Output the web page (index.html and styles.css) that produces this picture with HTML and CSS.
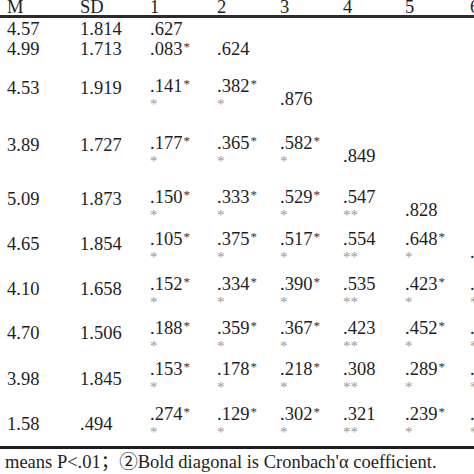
FILE: index.html
```html
<!DOCTYPE html>
<html lang="en">
<head>
    <meta charset="UTF-8">
    <meta name="viewport" content="width=device-width, initial-scale=1.0">
    <title>Correlation Table</title>

    <link rel="stylesheet" href="styles.css">
</head>
<body>

    <div class="table">
        <!-- Header -->
        <div class="row head">
            <div class="cell">M</div>
            <div class="cell">SD</div>
            <div class="cell">1</div>
            <div class="cell">2</div>
            <div class="cell">3</div>
            <div class="cell">4</div>
            <div class="cell">5</div>
            <div class="cell">6</div>
        </div>

        <div class="row r1">
            <div class="cell num">4.57</div>
            <div class="cell num">1.814</div>
            <div class="cell">.627</div>
        </div>

        <div class="row r2">
            <div class="cell num">4.99</div>
            <div class="cell num">1.713</div>
            <div class="cell">.083<sup>*</sup></div>
            <div class="cell">.624</div>
        </div>

        <div class="row r3">
            <div class="cell num">4.53</div>
            <div class="cell num">1.919</div>
            <div class="cell">.141<sup>*</sup><span class="mark">*</span></div>
            <div class="cell">.382<sup>*</sup><span class="mark">*</span></div>
            <div class="cell diag">.876</div>
        </div>

        <div class="row r4">
            <div class="cell num">3.89</div>
            <div class="cell num">1.727</div>
            <div class="cell">.177<sup>*</sup><span class="mark">*</span></div>
            <div class="cell">.365<sup>*</sup><span class="mark">*</span></div>
            <div class="cell">.582<sup>*</sup><span class="mark">*</span></div>
            <div class="cell diag">.849</div>
        </div>

        <div class="row r5">
            <div class="cell num">5.09</div>
            <div class="cell num">1.873</div>
            <div class="cell">.150<sup>*</sup><span class="mark">*</span></div>
            <div class="cell">.333<sup>*</sup><span class="mark">*</span></div>
            <div class="cell">.529<sup>*</sup><span class="mark">*</span></div>
            <div class="cell">.547<span class="mark">**</span></div>
            <div class="cell diag">.828</div>
        </div>

        <div class="row r6">
            <div class="cell num">4.65</div>
            <div class="cell num">1.854</div>
            <div class="cell">.105<sup>*</sup><span class="mark">*</span></div>
            <div class="cell">.375<sup>*</sup><span class="mark">*</span></div>
            <div class="cell">.517<sup>*</sup><span class="mark">*</span></div>
            <div class="cell">.554<span class="mark">**</span></div>
            <div class="cell">.648<sup>*</sup><span class="mark">*</span></div>
            <div class="cell diag">.</div>
        </div>

        <div class="row r7">
            <div class="cell num">4.10</div>
            <div class="cell num">1.658</div>
            <div class="cell">.152<sup>*</sup><span class="mark">*</span></div>
            <div class="cell">.334<sup>*</sup><span class="mark">*</span></div>
            <div class="cell">.390<sup>*</sup><span class="mark">*</span></div>
            <div class="cell">.535<span class="mark">**</span></div>
            <div class="cell">.423<sup>*</sup><span class="mark">*</span></div>
            <div class="cell">.<span class="mark">*</span></div>
        </div>

        <div class="row r8">
            <div class="cell num">4.70</div>
            <div class="cell num">1.506</div>
            <div class="cell">.188<sup>*</sup><span class="mark">*</span></div>
            <div class="cell">.359<sup>*</sup><span class="mark">*</span></div>
            <div class="cell">.367<sup>*</sup><span class="mark">*</span></div>
            <div class="cell">.423<span class="mark">**</span></div>
            <div class="cell">.452<sup>*</sup><span class="mark">*</span></div>
            <div class="cell">.<span class="mark">*</span></div>
        </div>

        <div class="row r9">
            <div class="cell num">3.98</div>
            <div class="cell num">1.845</div>
            <div class="cell">.153<sup>*</sup><span class="mark">*</span></div>
            <div class="cell">.178<sup>*</sup><span class="mark">*</span></div>
            <div class="cell">.218<sup>*</sup><span class="mark">*</span></div>
            <div class="cell">.308<span class="mark">**</span></div>
            <div class="cell">.289<sup>*</sup><span class="mark">*</span></div>
            <div class="cell">.<span class="mark">*</span></div>
        </div>

        <div class="row r10">
            <div class="cell num">1.58</div>
            <div class="cell num">.494</div>
            <div class="cell">.274<sup>*</sup><span class="mark">*</span></div>
            <div class="cell">.129<sup>*</sup><span class="mark">*</span></div>
            <div class="cell">.302<sup>*</sup><span class="mark">*</span></div>
            <div class="cell">.321<span class="mark">**</span></div>
            <div class="cell">.239<sup>*</sup><span class="mark">*</span></div>
            <div class="cell">.<span class="mark">*</span></div>
        </div>
    </div>

    <p class="note">means P&lt;.01；②Bold diagonal is Cronbach'α coefficient.</p>

</body>
</html>
```

FILE: styles.css
```css
body {
    margin: 0;
    background-color: #fff;
    color: #1e1e1e;
    font-family: "Liberation Serif", "Noto Sans CJK SC", serif;
    font-size: 18.5px;
    overflow: hidden;
    width: 474px;
    height: 474px;
}

/* Table */
.table {
    margin-top: -2px;
    width: 560px;
}

.row {
    display: grid;
    grid-template-columns: 73px 70px 67px 63px 63px 62px 65px 80px;
    padding-left: 7px;
    line-height: 20px;
    align-items: start;
}

.head {
    height: 17px;
    line-height: 18px;
    border-bottom: 3px solid #2b2b2b;
    margin-bottom: 1px;
}

.cell {
    white-space: nowrap;
}

/* Row heights */
.r1 { height: 20px; }
.r2 { height: 37px; }
.r3 { height: 57px; }
.r4 { height: 54px; }
.r5 { height: 42px; }
.r6 { height: 45px; }
.r7 { height: 44px; }
.r8 { height: 41px; }
.r9 { height: 45px; }
.r10 {
    height: 42px;
    border-bottom: 3px solid #1e1e1e;
}

/* M / SD sit a little lower than the two-line cells */
.r3 .num, .r4 .num, .r5 .num { padding-top: 2px; }
.r6 .num, .r7 .num, .r8 .num { padding-top: 5px; }
.r9 .num, .r10 .num { padding-top: 10px; }

/* Diagonal values are dropped */
.diag {
    padding-top: 13px;
}

sup {
    font-size: 13px;
    line-height: 0;
    vertical-align: 4px;
    margin-left: 1px;
    color: #333;
}

/* Second line of significance stars */
.mark {
    display: block;
    margin-top: 2px;
    font-size: 15px;
    line-height: 13px;
    color: #999;
}

/* Footnote */
.note {
    margin: 3px 0 0 5px;
    line-height: 20px;
    white-space: nowrap;
}
```
